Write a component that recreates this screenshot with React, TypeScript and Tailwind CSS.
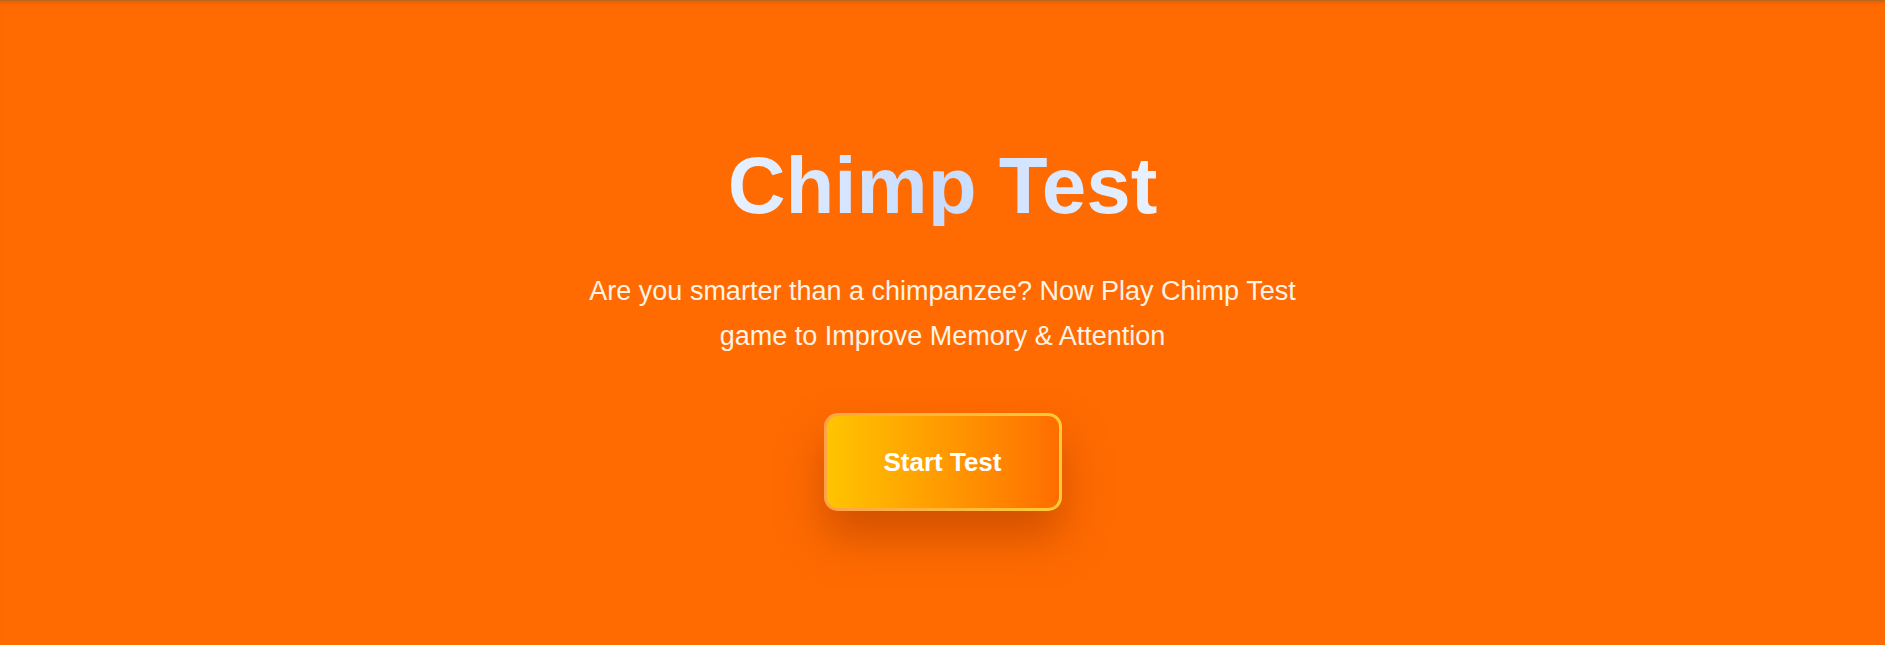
export default function App() {
  return (
    <main
      className="min-h-screen w-full bg-[#ff6b00] border-t border-[#b9671f] shadow-[inset_0_4px_4px_-3px_rgba(150,70,0,0.35)] flex flex-col items-center"
      style={{ fontFamily: "'Liberation Sans', Arial, sans-serif" }}
    >
      {/* Heading */}
      <h1 className="mt-[145px] text-[80px] leading-none font-bold bg-gradient-to-r from-[#e8f1ff] via-[#c7dcff] to-[#eaf2ff] bg-clip-text text-transparent">
        Chimp Test
      </h1>

      <p className="mt-[43px] max-w-[740px] text-center text-[27px] leading-[45px] text-[#fff3e6]">
        Are you smarter than a chimpanzee? Now Play Chimp Test game to Improve Memory &amp; Attention
      </p>

      {/* Button */}
      <div className="mt-[54px] rounded-[14px] p-[3px] bg-gradient-to-r from-[#ffa347] to-[#ffcc33] shadow-[0_26px_44px_rgba(165,55,0,0.5)]">
        <button className="w-[232px] h-[92px] rounded-[11px] bg-gradient-to-r from-[#ffc400] via-[#ff9a00] to-[#ff6d00] text-white text-[26px] font-bold">
          Start Test
        </button>
      </div>
    </main>
  );
}
